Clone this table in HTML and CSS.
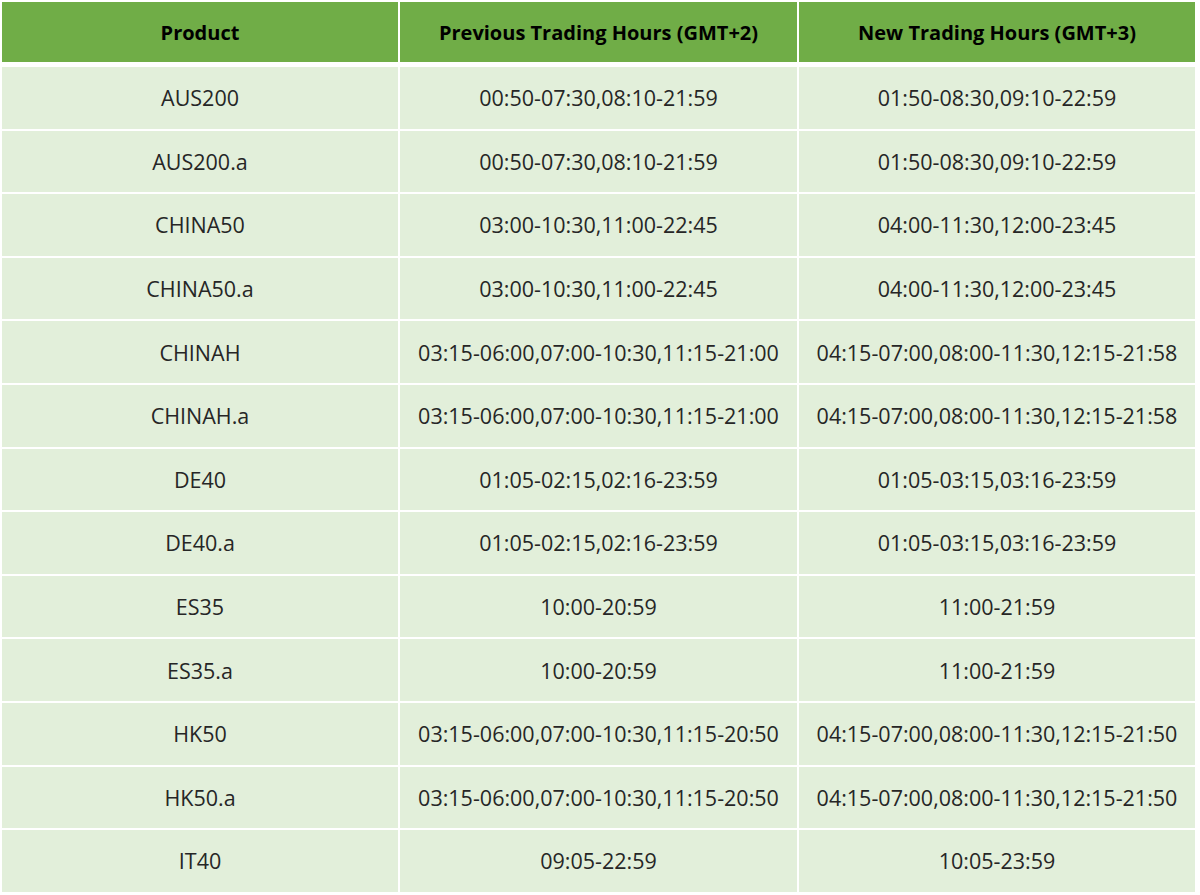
FILE: index.html
```html
<!DOCTYPE html>
<html>
<head>
<meta charset="utf-8">
<link rel="stylesheet" href="styles.css">
</head>
<body>
<div class="table">
  <div class="cell head">Product</div>
  <div class="cell head">Previous Trading Hours (GMT+2)</div>
  <div class="cell head">New Trading Hours (GMT+3)</div>

  <div class="cell">AUS200</div><div class="cell">00:50-07:30,08:10-21:59</div><div class="cell">01:50-08:30,09:10-22:59</div>
  <div class="cell">AUS200.a</div><div class="cell">00:50-07:30,08:10-21:59</div><div class="cell">01:50-08:30,09:10-22:59</div>
  <div class="cell">CHINA50</div><div class="cell">03:00-10:30,11:00-22:45</div><div class="cell">04:00-11:30,12:00-23:45</div>
  <div class="cell">CHINA50.a</div><div class="cell">03:00-10:30,11:00-22:45</div><div class="cell">04:00-11:30,12:00-23:45</div>
  <div class="cell">CHINAH</div><div class="cell">03:15-06:00,07:00-10:30,11:15-21:00</div><div class="cell">04:15-07:00,08:00-11:30,12:15-21:58</div>
  <div class="cell">CHINAH.a</div><div class="cell">03:15-06:00,07:00-10:30,11:15-21:00</div><div class="cell">04:15-07:00,08:00-11:30,12:15-21:58</div>
  <div class="cell">DE40</div><div class="cell">01:05-02:15,02:16-23:59</div><div class="cell">01:05-03:15,03:16-23:59</div>
  <div class="cell">DE40.a</div><div class="cell">01:05-02:15,02:16-23:59</div><div class="cell">01:05-03:15,03:16-23:59</div>
  <div class="cell">ES35</div><div class="cell">10:00-20:59</div><div class="cell">11:00-21:59</div>
  <div class="cell">ES35.a</div><div class="cell">10:00-20:59</div><div class="cell">11:00-21:59</div>
  <div class="cell">HK50</div><div class="cell">03:15-06:00,07:00-10:30,11:15-20:50</div><div class="cell">04:15-07:00,08:00-11:30,12:15-21:50</div>
  <div class="cell">HK50.a</div><div class="cell">03:15-06:00,07:00-10:30,11:15-20:50</div><div class="cell">04:15-07:00,08:00-11:30,12:15-21:50</div>
  <div class="cell">IT40</div><div class="cell">09:05-22:59</div><div class="cell">10:05-23:59</div>
</div>
</body>
</html>
```

FILE: styles.css
```css
html, body {
  margin: 0;
  padding: 0;
  background: #ffffff;
}
body {
  padding: 2px 0 0 2px;
  font-family: "Open Sans", "Liberation Sans", sans-serif;
}
.table {
  width: 1193px;
  display: grid;
  grid-template-columns: 396px 397px 396px;
  grid-template-rows: 63px repeat(13, 61.6px);
  column-gap: 2px;
  row-gap: 2px;
}
.cell {
  background: #e2efda;
  color: #262626;
  font-size: 21.5px;
  display: flex;
  align-items: center;
  justify-content: center;
  white-space: nowrap;
}
.cell.head {
  background: #70ad47;
  color: #000000;
  font-weight: 700;
  font-size: 20px;
  height: 60px;
  align-self: start;
}
```
